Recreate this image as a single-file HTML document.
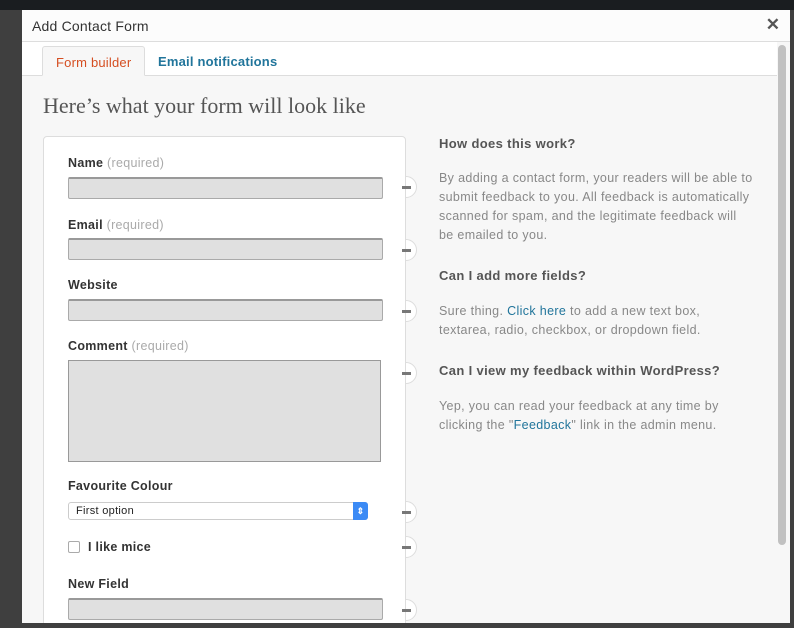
<!DOCTYPE html>
<html><head><style>
*{box-sizing:border-box;margin:0;padding:0}
body{width:794px;height:628px;overflow:hidden;background:#3f3f3f;font-family:"Liberation Sans",sans-serif;position:relative}
.topbar{position:absolute;left:0;top:0;width:794px;height:10px;background:#1a1d20}
.modal{position:absolute;left:22px;top:10px;width:768px;height:613px;background:#f7f7f7;overflow:hidden}
.hdr{height:32px;background:#fcfcfc;border-bottom:1px solid #ddd;font-size:14px;color:#333;padding:8px 10px;letter-spacing:.2px}
.close{position:absolute;right:10px;top:5px;font-size:17px;font-weight:bold;color:#555}
.tabs{height:34px;background:#fff;border-bottom:1px solid #ddd;position:relative;width:755px}
.tab{position:absolute;top:4px;height:30px;font-size:13px;padding:8px 13px;letter-spacing:.2px}
.t1{left:20px;border:1px solid #ddd;border-bottom:1px solid #f7f7f7;background:#f7f7f7;color:#d54e21;border-radius:3px 3px 0 0}
.t2{left:123px;color:#21759b;font-weight:bold}
h1{position:absolute;left:21px;top:83px;font-family:"Liberation Serif",serif;font-weight:normal;font-size:22px;color:#555}
.panel{position:absolute;left:21px;top:126px;width:363px;height:500px;background:#fff;border:1px solid #ddd;border-radius:4px}
.lbl{position:absolute;left:46px;font-size:12.5px;font-weight:bold;color:#333;letter-spacing:.3px}
.lbl span{font-weight:normal;color:#aaa}
.inp{position:absolute;left:46px;width:315px;height:22px;background:#e0e0e0;border:1px solid #aaa;border-top:2px solid #999;border-radius:2px}
.ta{height:102px;border:1px solid #999;width:313px;border-radius:0}
.sel{position:absolute;left:46px;width:300px;height:18px;background:#fff;border:1px solid #ccc;border-radius:3px;font-size:11px;color:#222;padding:2px 7px;letter-spacing:.3px}
.sel b{position:absolute;right:-1px;top:-1px;width:15px;height:18px;background:#3b8af5;border-radius:0 3px 3px 0;color:#fff;font-size:9px;text-align:center;line-height:18px}
.cb{position:absolute;left:46px;width:12px;height:12px;border:1px solid #aaa;border-radius:2px;background:#fff}
.h{position:absolute;left:373px;width:22px;height:22px;border-radius:50%;background:#fff;border:1px solid #ddd;clip-path:inset(0 0 0 11px)}
.d{position:absolute;left:380px;width:9px;height:3px;background:#777}
.side{position:absolute;left:417px;width:340px;font-size:12.5px;color:#888;line-height:19px;letter-spacing:.35px;white-space:nowrap}
.side h3{font-size:13px;color:#555;font-weight:bold}
.side a{color:#21759b}
.sb{position:absolute;left:756px;top:35px;width:8px;height:500px;background:#c1c1c1;border-radius:4px}
</style></head><body>
<div class="topbar"></div>
<div class="modal">
<div class="hdr">Add Contact Form</div>
<div class="close">✕</div>
<div class="tabs"><div class="tab t1">Form builder</div><div class="tab t2">Email notifications</div></div>
<h1>Here’s what your form will look like</h1>
<div class="panel"></div>
<div class="lbl" style="top:146px">Name <span>(required)</span></div>
<div class="inp" style="top:167px"></div>
<div class="lbl" style="top:208px">Email <span>(required)</span></div>
<div class="inp" style="top:228px"></div>
<div class="lbl" style="top:268px">Website</div>
<div class="inp" style="top:289px"></div>
<div class="lbl" style="top:329px">Comment <span>(required)</span></div>
<div class="inp ta" style="top:350px"></div>
<div class="lbl" style="top:469px">Favourite Colour</div>
<div class="sel" style="top:492px">First option<b>⇕</b></div>
<div class="cb" style="top:531px"></div>
<div class="lbl" style="top:530px;left:66px">I like mice</div>
<div class="lbl" style="top:567px">New Field</div>
<div class="inp" style="top:588px"></div>
<div class="h" style="top:166px"></div><div class="d" style="top:176px"></div>
<div class="h" style="top:229px"></div><div class="d" style="top:239px"></div>
<div class="h" style="top:290px"></div><div class="d" style="top:300px"></div>
<div class="h" style="top:352px"></div><div class="d" style="top:362px"></div>
<div class="h" style="top:491px"></div><div class="d" style="top:501px"></div>
<div class="h" style="top:526px"></div><div class="d" style="top:536px"></div>
<div class="h" style="top:589px"></div><div class="d" style="top:599px"></div>
<div class="side" style="top:124px"><h3>How does this work?</h3></div>
<div class="side" style="top:159px">By adding a contact form, your readers will be able to<br>submit feedback to you. All feedback is automatically<br>scanned for spam, and the legitimate feedback will<br>be emailed to you.</div>
<div class="side" style="top:256px"><h3>Can I add more fields?</h3></div>
<div class="side" style="top:292px">Sure thing. <a>Click here</a> to add a new text box,<br>textarea, radio, checkbox, or dropdown field.</div>
<div class="side" style="top:351px"><h3>Can I view my feedback within WordPress?</h3></div>
<div class="side" style="top:387px">Yep, you can read your feedback at any time by<br>clicking the "<a>Feedback</a>" link in the admin menu.</div>
<div class="sb"></div>
</div>
</body></html>
